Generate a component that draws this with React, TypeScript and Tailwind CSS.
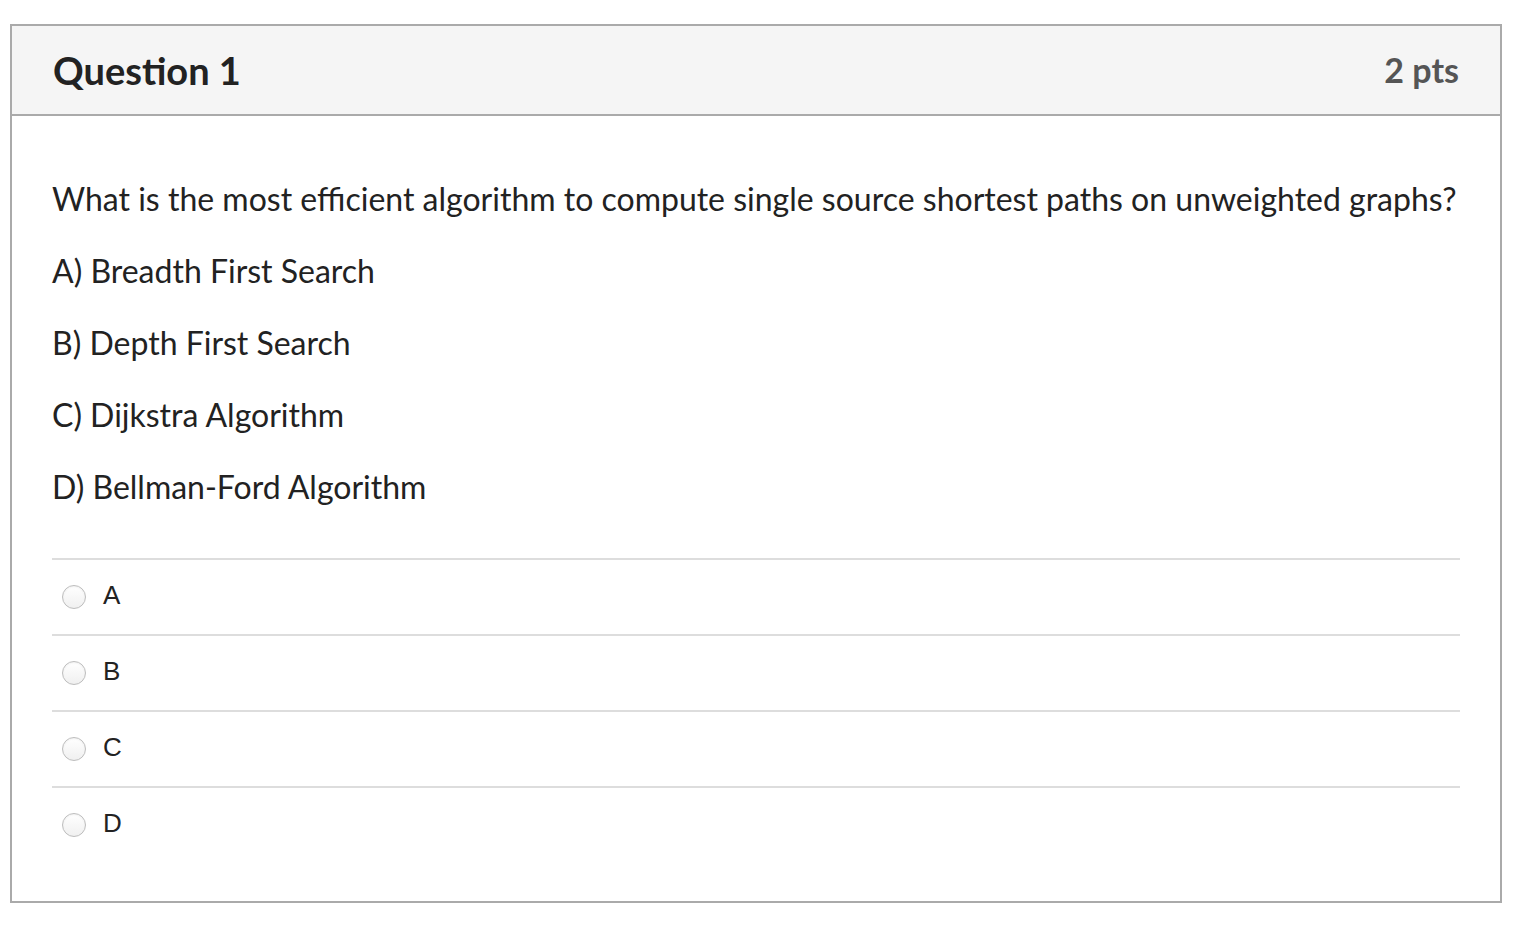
import React from "react";

const lato = { fontFamily: "Lato, 'Noto Sans', sans-serif" };
const arial = { fontFamily: "'Liberation Sans', Arial, sans-serif" };

export default function App() {
  const options = [
    "A) Breadth First Search",
    "B) Depth First Search",
    "C) Dijkstra Algorithm",
    "D) Bellman-Ford Algorithm",
  ];
  const answers = ["A", "B", "C", "D"];
  return (
    <div className="w-[1518px] h-[940px] bg-white" style={lato}>
      <div className="pt-[24px] pl-[10px]">
        <div className="w-[1492px] border-2 border-[#aaaaaa] bg-white">
          <div className="h-[90px] bg-[#f5f5f5] border-b-2 border-[#aaaaaa] flex items-center justify-between px-[41px]">
            <span className="text-[38px] font-bold text-[#222222] leading-none">Question 1</span>
            <span className="text-[34px] font-bold text-[#555555] leading-none">2 pts</span>
          </div>
          <div className="px-[40px] pt-[47px] pb-[39px]">
            <div className="h-[72px] flex items-center text-[32px] text-[#222222] whitespace-nowrap">
              What is the most efficient algorithm to compute single source shortest paths on unweighted graphs?
            </div>
            {options.map((o) => (
              <div key={o} className="h-[72px] flex items-center text-[32px] text-[#222222]">
                {o}
              </div>
            ))}
            <div className="mt-[35px]">
              {answers.map((a) => (
                <div key={a} className="h-[76px] border-t-2 border-[#dddddd] flex items-center pl-[10px]">
                  <span className="w-[24px] h-[24px] rounded-full border border-[#bdbdbd] bg-gradient-to-b from-white to-[#f0f0f0] shadow-[inset_0_1px_2px_rgba(0,0,0,0.06)]" />
                  <span className="ml-[17px] mb-[4px] text-[26px] text-[#222222] leading-none" style={arial}>
                    {a}
                  </span>
                </div>
              ))}
            </div>
          </div>
        </div>
      </div>
    </div>
  );
}
